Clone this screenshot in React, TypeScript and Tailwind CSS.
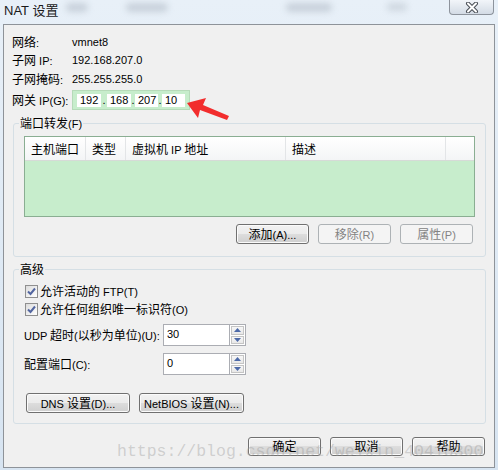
import React from 'react';

const CJK_RE = /[\u2e80-\u9fff\uff00-\uffef\u3000-\u303f]/;

function M({ s }: { s: string }) {
  const parts =
    s.match(/[\u2e80-\u9fff\uff00-\uffef\u3000-\u303f]+|[^\u2e80-\u9fff\uff00-\uffef\u3000-\u303f]+/g) || [];
  return (
    <span className="whitespace-pre">
      {parts.map((p, i) =>
        CJK_RE.test(p) ? (
          <span key={i} className="text-[12px]">
            {p}
          </span>
        ) : (
          <span key={i} className="text-[11px]">
            {p}
          </span>
        )
      )}
    </span>
  );
}

function Btn({ label, w, disabled }: { label: string; w: string; disabled?: boolean }) {
  return (
    <div
      className={
        disabled
          ? `${w} h-full flex items-center justify-center rounded-[3px] border border-[#adb2b5] bg-[#f4f4f4] text-[#838383]`
          : `${w} h-full flex items-center justify-center rounded-[3px] border border-[#707070] bg-[linear-gradient(#f2f2f2_0%,#ebebeb_50%,#dddddd_50%,#cfcfcf_100%)] shadow-[inset_0_0_0_1px_#fbfbfb] text-black`
      }
    >
      <span className="leading-[14px]">
        <M s={label} />
      </span>
    </div>
  );
}

function Check({ label }: { label: string }) {
  return (
    <div className="h-[18px] flex items-center ml-[11px]">
      <div className="w-[13px] h-[13px] border border-[#8f8f8f] bg-[linear-gradient(135deg,#dcdcdc,#ffffff)] flex items-center justify-center">
        <svg width="11" height="11" viewBox="0 0 11 11">
          <path d="M2 5.5 L4.5 8 L9 2.5" fill="none" stroke="#5366a0" strokeWidth="2" />
        </svg>
      </div>
      <span className="ml-[2px] leading-[16px]">
        <M s={label} />
      </span>
    </div>
  );
}

function Spin({ value }: { value: string }) {
  return (
    <div className="flex h-[22px]">
      <div className="w-[66px] h-full border border-[#abadb3] border-r-0 bg-white pl-[3px] pt-[3px] text-[11px] leading-[13px]">
        {value}
      </div>
      <div className="w-[17px] h-full border border-[#abadb3] bg-white flex flex-col p-[1px] gap-[1px]">
        <div className="flex-1 border border-[#c5c5c5] bg-[linear-gradient(#f7f7f7,#e8e8e8)] flex items-center justify-center">
          <svg width="7" height="4" viewBox="0 0 7 4">
            <path d="M0 4 L3.5 0 L7 4 Z" fill="#4d6aa8" />
          </svg>
        </div>
        <div className="flex-1 border border-[#c5c5c5] bg-[linear-gradient(#f7f7f7,#e8e8e8)] flex items-center justify-center">
          <svg width="7" height="4" viewBox="0 0 7 4">
            <path d="M0 0 L3.5 4 L7 0 Z" fill="#4d6aa8" />
          </svg>
        </div>
      </div>
    </div>
  );
}

function IpBox({ v, w }: { v: string; w: string }) {
  return <div className={`${w} h-[13px] bg-white pl-[3px] text-[11px] leading-[13px]`}>{v}</div>;
}

export default function App() {
  return (
    <div
      className="relative w-[498px] h-[470px] overflow-hidden bg-[linear-gradient(#e8f0f8,#d7e4f1)] text-black"
      style={{ fontFamily: '"Liberation Sans", "Noto Sans CJK SC", sans-serif' }}
    >
      {/* title bar */}
      <div className="h-[24px] flex items-start">
        <div className="pl-[4px] pt-[3px] text-[13px] leading-[16px] text-[#1a1a1a] whitespace-nowrap">NAT 设置</div>
        <div className="ml-[8px] mt-[3px] w-[22px] h-[9px] rounded-full bg-[#aab4bf]/50 blur-[3px]" />
        <div className="ml-[38px] mt-[3px] w-[42px] h-[9px] rounded-full bg-[#aab4bf]/50 blur-[3px]" />
        <div className="ml-[118px] mt-[3px] w-[46px] h-[9px] rounded-full bg-[#aab4bf]/50 blur-[3px]" />
        <div className="ml-[55px] mt-[3px] w-[20px] h-[8px] rounded-full bg-[#aab4bf]/40 blur-[3px]" />
        <div className="flex-1" />
        <div className="mr-[4px] w-[45px] h-[15px] rounded-b-[4px] border border-t-0 border-[#8d939c] bg-[linear-gradient(#f2f5f9,#d3dbe5)] flex items-center justify-center">
          <svg width="14" height="11" viewBox="0 0 14 11">
            <path d="M3 1.5 L11 9.5 M11 1.5 L3 9.5" stroke="#4a4f57" strokeWidth="4" strokeLinecap="round" />
            <path d="M3 1.5 L11 9.5 M11 1.5 L3 9.5" stroke="#ffffff" strokeWidth="2" strokeLinecap="round" />
          </svg>
        </div>
      </div>

      {/* panel */}
      <div className="ml-[3px] w-[492px] h-[444px] border border-[#8e9399] bg-[#f0f0f0] flex flex-col">
        <div className="pt-[8px] pl-[8px] flex flex-col">
          <div className="h-[18px] flex items-center">
            <div className="w-[60px] leading-[16px]">
              <M s="网络:" />
            </div>
            <div className="text-[11px]">vmnet8</div>
          </div>
          <div className="h-[18px] flex items-center">
            <div className="w-[60px] leading-[16px]">
              <M s="子网 IP:" />
            </div>
            <div className="text-[11px]">192.168.207.0</div>
          </div>
          <div className="mt-[1px] h-[18px] flex items-center">
            <div className="w-[60px] leading-[16px]">
              <M s="子网掩码:" />
            </div>
            <div className="text-[11px]">255.255.255.0</div>
          </div>
          <div className="mt-[2px] h-[20px] flex items-center">
            <div className="w-[60px] leading-[16px]">
              <M s="网关 IP(G):" />
            </div>
            <div className="w-[118px] h-[20px] border border-[#b6dab9] bg-[#c7edcc] flex items-start pt-[3px] pl-[4px]">
              <IpBox v="192" w="w-[24px]" />
              <div className="w-[6px] text-[11px] leading-[13px] text-center">.</div>
              <IpBox v="168" w="w-[24px]" />
              <div className="w-[4px] text-[11px] leading-[13px] text-center">.</div>
              <IpBox v="207" w="w-[23px]" />
              <div className="w-[4px] text-[11px] leading-[13px] text-center">.</div>
              <IpBox v="10" w="w-[23px]" />
            </div>
          </div>
        </div>

        {/* port forwarding */}
        <fieldset className="ml-[9px] mt-[5px] w-[473px] border border-[#d5dfe5] rounded-[3px] pb-[12px]">
          <legend className="ml-[5px] px-[1px] leading-[16px]">
            <M s="端口转发(F)" />
          </legend>
          <div className="ml-[10px] mt-[4px] w-[451px] h-[81px] border border-[#8aae92] bg-[#c7edcc] flex flex-col">
            <div className="h-[24px] flex bg-[linear-gradient(#ffffff,#f4f5f6)] border-b border-[#d6dbd7]">
              <div className="w-[61px] border-r border-[#e3e5e7] pl-[6px] flex items-center">
                <M s="主机端口" />
              </div>
              <div className="w-[40px] border-r border-[#e3e5e7] pl-[6px] flex items-center">
                <M s="类型" />
              </div>
              <div className="w-[160px] border-r border-[#e3e5e7] pl-[6px] flex items-center">
                <M s="虚拟机 IP 地址" />
              </div>
              <div className="w-[160px] border-r border-[#e3e5e7] pl-[6px] flex items-center">
                <M s="描述" />
              </div>
              <div className="flex-1" />
            </div>
          </div>
          <div className="mt-[7px] h-[20px] flex justify-end gap-[9px] pr-[12px]">
            <Btn label="添加(A)..." w="w-[73px]" />
            <Btn label="移除(R)" w="w-[73px]" disabled />
            <Btn label="属性(P)" w="w-[73px]" disabled />
          </div>
        </fieldset>

        {/* advanced */}
        <fieldset className="ml-[9px] mt-[4px] w-[473px] border border-[#d5dfe5] rounded-[3px] pb-[10px]">
          <legend className="ml-[5px] px-[1px] leading-[16px]">
            <M s="高级" />
          </legend>
          <div className="mt-[4px]">
            <Check label="允许活动的 FTP(T)" />
            <Check label="允许任何组织唯一标识符(O)" />
          </div>
          <div className="mt-[6px] ml-[10px] flex items-center">
            <div className="w-[139px] leading-[16px]">
              <M s="UDP 超时(以秒为单位)(U):" />
            </div>
            <Spin value="30" />
          </div>
          <div className="mt-[7px] ml-[10px] flex items-center">
            <div className="w-[139px] leading-[16px]">
              <M s="配置端口(C):" />
            </div>
            <Spin value="0" />
          </div>
          <div className="mt-[18px] ml-[12px] h-[20px] flex gap-[9px]">
            <Btn label="DNS 设置(D)..." w="w-[104px]" />
            <Btn label="NetBIOS 设置(N)..." w="w-[105px]" />
          </div>
        </fieldset>

        <div className="mt-[13px] h-[19px] flex justify-end gap-[9px] mr-[9px]">
          <Btn label="确定" w="w-[73px]" />
          <Btn label="取消" w="w-[73px]" />
          <Btn label="帮助" w="w-[73px]" />
        </div>
      </div>

      {/* red arrow annotation */}
      <svg className="absolute left-[180px] top-[94px]" width="52" height="30" viewBox="180 94 52 30">
        <polygon points="187,103 206,98 203,105 229,116 227,120 200,110 198,118" fill="#f22d2d" />
      </svg>

      {/* watermark */}
      <div
        className="absolute left-[117px] top-[444px] text-[16.5px] leading-[16.5px] whitespace-nowrap text-[#9a9a9a]/40 pointer-events-none"
        style={{ fontFamily: '"Liberation Mono", monospace' }}
      >
        https://blog.csdn.net/weixin_40418300
      </div>
    </div>
  );
}
